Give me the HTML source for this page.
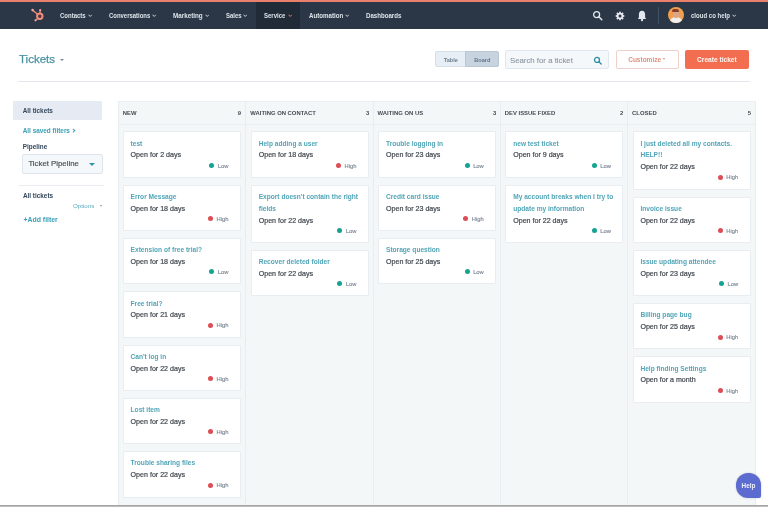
<!DOCTYPE html>
<html><head><meta charset="utf-8">
<style>
*{margin:0;padding:0;box-sizing:border-box}
html,body{width:768px;height:507px;overflow:hidden;background:#fff;font-family:"Liberation Sans",sans-serif;position:relative}
.a{position:absolute;white-space:nowrap}
#top{position:absolute;left:0;top:0;width:768px;height:2px;background:#ea7f6c}
#nav{position:absolute;left:0;top:2px;width:768px;height:26.9px;background:#2b3746}
.ni{position:absolute;top:10px;font-size:7px;line-height:8px;color:#dde3ea;font-weight:bold;transform:scaleX(0.87);transform-origin:0 0}
.chev{position:absolute;top:11.8px;width:2.4px;height:2.4px;border-right:0.7px solid #c9d2dc;border-bottom:0.7px solid #c9d2dc;transform:rotate(45deg)}
#bottom{position:absolute;left:0;top:505px;width:768px;height:2px;background:linear-gradient(#9a9a9a,#c8c8c8)}
.btn{position:absolute;border-radius:2px}
.sb{position:absolute;font-size:6.4px;line-height:8px;font-weight:bold;color:#33475b}
.ch{position:absolute;top:109.6px;font-size:5.9px;line-height:7px;font-weight:bold;color:#454b52}
.cd{position:absolute;width:118.1px;background:#fff;border:0.7px solid #e8edf1;border-radius:1px;padding:5.3px 11.5px 0 6.8px;white-space:nowrap}
.ct{font-size:6.6px;line-height:11.8px;font-weight:bold;color:#51a5b7}
.cb{font-size:7.1px;line-height:12.1px;color:#42484f;-webkit-text-stroke:0.2px #42484f}
.cp{text-align:right;font-size:5.8px;line-height:9px;color:#7f8a96;-webkit-text-stroke:0.15px #7f8a96}
.cp i{display:inline-block;width:5px;height:5px;border-radius:50%;margin-right:3.6px;vertical-align:-0.3px}
.lo{background:#14a392}.hi{background:#dc4d55}
.wrap{position:absolute;left:0;top:0;width:768px;height:507px;will-change:transform}</style></head><body><div class="wrap">
<div id="top"></div>
<div id="nav">
  <div class="a" style="left:256px;top:0;width:44px;height:26.9px;background:#212b38"></div>
  <!-- logo -->
  <svg class="a" style="left:30px;top:5px" width="16" height="16" viewBox="0 0 16 16">
    <g stroke="#ee8e7c" fill="none" stroke-linecap="round">
      <circle cx="9.8" cy="9.2" r="2.7" stroke-width="2"/>
      <line x1="9.9" y1="6.5" x2="10.2" y2="3.3" stroke-width="1.3"/>
      <line x1="7.8" y1="7.6" x2="2.8" y2="3.2" stroke-width="1.3"/>
      <line x1="8" y1="11.3" x2="5.6" y2="13.2" stroke-width="1.3"/>
    </g>
    <circle cx="9.8" cy="9.2" r="1.1" fill="#7a2a24"/>
    <circle cx="10.2" cy="3.2" r="1.1" fill="#f2a59a"/>
    <circle cx="2.6" cy="3.1" r="1.3" fill="#f2a59a"/>
    <circle cx="5.5" cy="13.3" r="1.1" fill="#f2a59a"/>
  </svg>
  <div class="ni" style="left:60px;transform:scaleX(0.855)">Contacts</div><svg class="a" style="left:88.1px;top:12.1px" width="4.4" height="3.4" viewBox="0 0 4.4 3.4"><polyline points="0.5,0.7 2.2,2.5 3.9,0.7" fill="none" stroke="#d3dae2" stroke-width="0.95"/></svg>
  <div class="ni" style="left:109px;transform:scaleX(0.848)">Conversations</div><svg class="a" style="left:152.1px;top:12.1px" width="4.4" height="3.4" viewBox="0 0 4.4 3.4"><polyline points="0.5,0.7 2.2,2.5 3.9,0.7" fill="none" stroke="#d3dae2" stroke-width="0.95"/></svg>
  <div class="ni" style="left:173.3px;transform:scaleX(0.898)">Marketing</div><svg class="a" style="left:205.1px;top:12.1px" width="4.4" height="3.4" viewBox="0 0 4.4 3.4"><polyline points="0.5,0.7 2.2,2.5 3.9,0.7" fill="none" stroke="#d3dae2" stroke-width="0.95"/></svg>
  <div class="ni" style="left:226px;transform:scaleX(0.858)">Sales</div><svg class="a" style="left:243.1px;top:12.1px" width="4.4" height="3.4" viewBox="0 0 4.4 3.4"><polyline points="0.5,0.7 2.2,2.5 3.9,0.7" fill="none" stroke="#d3dae2" stroke-width="0.95"/></svg>
  <div class="ni" style="left:264px;transform:scaleX(0.859)">Service</div><svg class="a" style="left:287.6px;top:12.1px" width="4.4" height="3.4" viewBox="0 0 4.4 3.4"><polyline points="0.5,0.7 2.2,2.5 3.9,0.7" fill="none" stroke="#d98a78" stroke-width="0.95"/></svg>
  <div class="ni" style="left:308.7px;transform:scaleX(0.881)">Automation</div><svg class="a" style="left:345.1px;top:12.1px" width="4.4" height="3.4" viewBox="0 0 4.4 3.4"><polyline points="0.5,0.7 2.2,2.5 3.9,0.7" fill="none" stroke="#d3dae2" stroke-width="0.95"/></svg>
  <div class="ni" style="left:365.6px;transform:scaleX(0.875)">Dashboards</div>
  <!-- right icons -->
  <svg class="a" style="left:592.3px;top:8.2px" width="12" height="12" viewBox="0 0 12 12">
    <circle cx="4.6" cy="4.6" r="3" stroke="#e3e8ee" stroke-width="1.3" fill="none"/>
    <line x1="6.8" y1="6.8" x2="9.8" y2="9.8" stroke="#e3e8ee" stroke-width="1.5" stroke-linecap="round"/>
  </svg>
  <svg class="a" style="left:614px;top:7.7px" width="12" height="12" viewBox="0 0 12 12">
    <g fill="#e3e8ee"><circle cx="6" cy="6" r="3.3"/>
    <rect x="5.1" y="1.7" width="1.8" height="8.6"/><rect x="1.7" y="5.1" width="8.6" height="1.8"/>
    <rect x="5.1" y="1.7" width="1.8" height="8.6" transform="rotate(45 6 6)"/><rect x="5.1" y="1.7" width="1.8" height="8.6" transform="rotate(-45 6 6)"/></g>
    <circle cx="6" cy="6" r="1.5" fill="#2b3746"/>
  </svg>
  <svg class="a" style="left:637px;top:7.9px" width="10" height="12" viewBox="0 0 10 12">
    <path d="M5 0.8 C2.6 0.8 1.9 2.8 1.9 4.6 L1.9 7.6 L0.8 9 L9.2 9 L8.1 7.6 L8.1 4.6 C8.1 2.8 7.4 0.8 5 0.8Z" fill="#e3e8ee"/>
    <circle cx="5" cy="10" r="1.2" fill="#e3e8ee"/>
  </svg>
  <div class="a" style="left:657.5px;top:5px;width:0.8px;height:16.5px;background:#3f5063"></div>
  <!-- avatar -->
  <div class="a" style="left:667.6px;top:4.8px;width:16.2px;height:16.2px;border-radius:50%;background:#eea04f;overflow:hidden">
    <div class="a" style="left:2px;top:10.6px;width:12.2px;height:9px;border-radius:50%;background:#f1efec"></div>
    <div class="a" style="left:5.2px;top:3.2px;width:5.8px;height:8.4px;border-radius:48%;background:#dca58c"></div>
    <div class="a" style="left:4.9px;top:2.6px;width:6.4px;height:3px;border-radius:3px 3px 1px 1px;background:#8a3e26"></div>
  </div>
  <div class="ni" style="left:691px;transform:scaleX(0.865)">cloud co help</div><svg class="a" style="left:732.1px;top:12.1px" width="4.4" height="3.4" viewBox="0 0 4.4 3.4"><polyline points="0.5,0.7 2.2,2.5 3.9,0.7" fill="none" stroke="#d3dae2" stroke-width="0.95"/></svg>
</div>

<!-- header -->
<div class="a" style="left:19px;top:51.5px;font-size:11.5px;line-height:14px;color:#4a93a3;-webkit-text-stroke:0.25px #4a93a3">Tickets</div>
<div class="a" style="left:60.3px;top:58.6px;width:0;height:0;border-left:2px solid transparent;border-right:2px solid transparent;border-top:2.6px solid #7b8a99"></div>
<div class="a" style="left:18px;top:80.8px;width:732px;height:1px;background:#e3e7ec"></div>

<!-- toggle -->
<div class="btn" style="left:435.2px;top:51.3px;width:63.4px;height:15.9px;background:#e8eef5;border:0.6px solid #d6dee8"></div>
<div class="a" style="left:465.2px;top:51.3px;width:33.4px;height:15.9px;background:#c7d3df;border-radius:0 2px 2px 0;border:0.6px solid #b9c6d4"></div>
<div class="a" style="left:443.7px;top:56.5px;font-size:5.6px;line-height:7px;font-weight:bold;color:#6d7f91">Table</div>
<div class="a" style="left:474.3px;top:56.5px;font-size:5.6px;line-height:7px;font-weight:bold;color:#62768b">Board</div>
<!-- search -->
<div class="btn" style="left:504.5px;top:50.2px;width:104.3px;height:19px;background:#f5f8fa;border:0.7px solid #e1e7ee"></div>
<div class="a" style="left:510px;top:55.6px;font-size:7.8px;line-height:9px;color:#8a96a3;-webkit-text-stroke:0.1px #8a96a3">Search for a ticket</div>
<svg class="a" style="left:593px;top:56px" width="10" height="9" viewBox="0 0 10 9">
  <circle cx="4" cy="3.9" r="2.5" stroke="#2e8ea6" stroke-width="1.3" fill="none"/>
  <line x1="5.9" y1="5.8" x2="8.2" y2="8" stroke="#2e8ea6" stroke-width="1.4" stroke-linecap="round"/>
</svg>
<!-- customize -->
<div class="btn" style="left:616px;top:49.8px;width:63.3px;height:19.5px;background:#fff;border:0.8px solid #ecd0c9"></div>
<div class="a" style="left:628.2px;top:55.8px;font-size:6.5px;line-height:8px;font-weight:bold;color:#dc907e">Customize</div>
<div class="a" style="left:663.4px;top:58.4px;width:0;height:0;border-left:1.9px solid transparent;border-right:1.9px solid transparent;border-top:2.6px solid #c98e80"></div>
<!-- create -->
<div class="btn" style="left:685.4px;top:50px;width:63.5px;height:19px;background:#f36e50"></div>
<div class="a" style="left:697.1px;top:55.9px;font-size:6.6px;line-height:8px;font-weight:bold;color:#fff5f0">Create ticket</div>

<!-- sidebar -->
<div class="a" style="left:12.8px;top:101.3px;width:89.5px;height:18.8px;background:#e6ebf3;border-radius:1px"></div>
<div class="sb" style="left:22.7px;top:106.6px">All tickets</div>
<div class="sb" style="left:22.7px;top:127.2px;color:#3aa0b8">All saved filters</div>
<div class="a" style="left:71.6px;top:129.4px;width:2.6px;height:2.6px;border-right:0.8px solid #3aa0b8;border-top:0.8px solid #3aa0b8;transform:rotate(45deg)"></div>
<div class="sb" style="left:22.7px;top:143.1px">Pipeline</div>
<div class="btn" style="left:22px;top:154.4px;width:80.7px;height:19.6px;background:#f5f8fa;border:0.7px solid #dfe5ec"></div>
<div class="a" style="left:28.4px;top:159.4px;font-size:7.8px;line-height:9px;color:#454c54;-webkit-text-stroke:0.15px #454c54">Ticket Pipeline</div>
<div class="a" style="left:88.6px;top:162.8px;width:0;height:0;border-left:3px solid transparent;border-right:3px solid transparent;border-top:3.3px solid #2d93ab"></div>
<div class="a" style="left:18.6px;top:185.2px;width:85px;height:0.8px;background:#e8ecf1"></div>
<div class="sb" style="left:22.9px;top:191.8px">All tickets</div>
<div class="a" style="left:73px;top:202.2px;font-size:6.2px;line-height:7px;color:#5aa9bd">Options</div>
<div class="a" style="left:99.5px;top:205px;width:0;height:0;border-left:1.6px solid transparent;border-right:1.6px solid transparent;border-top:2.2px solid #8a99a8"></div>
<div class="sb" style="left:23.5px;top:216px;color:#3aa0b8;font-size:6.9px">+Add filter</div>

<!-- BOARD -->
<div class="a" style="left:118px;top:101.3px;width:637.5px;height:406px;background:#f3f7f8;border-left:0.8px solid #e6ecef;border-top:0.8px solid #ebf0f2;border-right:0.8px solid #e6ecef"></div>
<div class="a" style="left:118px;top:123.9px;width:637.5px;height:0.8px;background:#e9eef1"></div>
<div class="ch" style="left:122.8px">NEW</div>
<div class="ch" style="left:233.1px;width:8px;text-align:right">9</div>
<div class="cd" style="left:122.8px;top:131.4px;height:46.4px"><div class="ct">test</div><div class="cb">Open for 2 days</div><div class="cp"><i class="lo"></i>Low</div></div>
<div class="cd" style="left:122.8px;top:184.7px;height:46.4px"><div class="ct">Error Message</div><div class="cb">Open for 18 days</div><div class="cp"><i class="hi"></i>High</div></div>
<div class="cd" style="left:122.8px;top:238.0px;height:46.4px"><div class="ct">Extension of free trial?</div><div class="cb">Open for 18 days</div><div class="cp"><i class="lo"></i>Low</div></div>
<div class="cd" style="left:122.8px;top:291.3px;height:46.4px"><div class="ct">Free trial?</div><div class="cb">Open for 21 days</div><div class="cp"><i class="hi"></i>High</div></div>
<div class="cd" style="left:122.8px;top:344.6px;height:46.4px"><div class="ct">Can't log in</div><div class="cb">Open for 22 days</div><div class="cp"><i class="hi"></i>High</div></div>
<div class="cd" style="left:122.8px;top:397.9px;height:46.4px"><div class="ct">Lost item</div><div class="cb">Open for 22 days</div><div class="cp"><i class="hi"></i>High</div></div>
<div class="cd" style="left:122.8px;top:451.2px;height:46.4px"><div class="ct">Trouble sharing files</div><div class="cb">Open for 22 days</div><div class="cp"><i class="hi"></i>High</div></div>
<div class="a" style="left:245.05px;top:101.3px;width:0.9px;height:406px;background:#e7edf0"></div>
<div class="ch" style="left:250.3px">WAITING ON CONTACT</div>
<div class="ch" style="left:361.2px;width:8px;text-align:right">3</div>
<div class="cd" style="left:250.9px;top:131.4px;height:46.4px"><div class="ct">Help adding a user</div><div class="cb">Open for 18 days</div><div class="cp"><i class="hi"></i>High</div></div>
<div class="cd" style="left:250.9px;top:184.7px;height:58.2px"><div class="ct">Export doesn't contain the right<br>fields</div><div class="cb">Open for 22 days</div><div class="cp"><i class="lo"></i>Low</div></div>
<div class="cd" style="left:250.9px;top:249.8px;height:46.4px"><div class="ct">Recover deleted folder</div><div class="cb">Open for 22 days</div><div class="cp"><i class="lo"></i>Low</div></div>
<div class="a" style="left:373.15px;top:101.3px;width:0.9px;height:406px;background:#e7edf0"></div>
<div class="ch" style="left:377.6px">WAITING ON US</div>
<div class="ch" style="left:488.2px;width:8px;text-align:right">3</div>
<div class="cd" style="left:378.2px;top:131.4px;height:46.4px"><div class="ct">Trouble logging in</div><div class="cb">Open for 23 days</div><div class="cp"><i class="lo"></i>Low</div></div>
<div class="cd" style="left:378.2px;top:184.7px;height:46.4px"><div class="ct">Credit card issue</div><div class="cb">Open for 23 days</div><div class="cp"><i class="hi"></i>High</div></div>
<div class="cd" style="left:378.2px;top:238.0px;height:46.4px"><div class="ct">Storage question</div><div class="cb">Open for 25 days</div><div class="cp"><i class="lo"></i>Low</div></div>
<div class="a" style="left:500.15px;top:101.3px;width:0.9px;height:406px;background:#e7edf0"></div>
<div class="ch" style="left:504.8px">DEV ISSUE FIXED</div>
<div class="ch" style="left:615.4px;width:8px;text-align:right">2</div>
<div class="cd" style="left:505.4px;top:131.4px;height:46.4px"><div class="ct">new test ticket</div><div class="cb">Open for 9 days</div><div class="cp"><i class="lo"></i>Low</div></div>
<div class="cd" style="left:505.4px;top:184.7px;height:58.2px"><div class="ct">My account breaks when I try to<br>update my information</div><div class="cb">Open for 22 days</div><div class="cp"><i class="lo"></i>Low</div></div>
<div class="a" style="left:627.35px;top:101.3px;width:0.9px;height:406px;background:#e7edf0"></div>
<div class="ch" style="left:632.1px">CLOSED</div>
<div class="ch" style="left:743.1px;width:8px;text-align:right">5</div>
<div class="cd" style="left:632.6px;top:131.4px;height:58.2px"><div class="ct">I just deleted all my contacts.<br>HELP!!</div><div class="cb">Open for 22 days</div><div class="cp"><i class="hi"></i>High</div></div>
<div class="cd" style="left:632.6px;top:196.5px;height:46.4px"><div class="ct">Invoice issue</div><div class="cb">Open for 22 days</div><div class="cp"><i class="hi"></i>High</div></div>
<div class="cd" style="left:632.6px;top:249.8px;height:46.4px"><div class="ct">Issue updating attendee</div><div class="cb">Open for 23 days</div><div class="cp"><i class="lo"></i>Low</div></div>
<div class="cd" style="left:632.6px;top:303.1px;height:46.4px"><div class="ct">Billing page bug</div><div class="cb">Open for 25 days</div><div class="cp"><i class="hi"></i>High</div></div>
<div class="cd" style="left:632.6px;top:356.4px;height:46.4px"><div class="ct">Help finding Settings</div><div class="cb">Open for a month</div><div class="cp"><i class="hi"></i>High</div></div>
<!-- /BOARD -->
<div class="a" style="left:736.3px;top:473px;width:24.5px;height:25.3px;background:#5b6bcf;border-radius:12px 12px 2px 12px;box-shadow:0 0 2px rgba(40,50,90,0.25)"></div>
<div class="a" style="left:736.3px;top:481.5px;width:24.5px;text-align:center;font-size:6.4px;line-height:8px;font-weight:bold;color:#eef0fb">Help</div>
<div id="bottom"></div>
</div></body></html>
